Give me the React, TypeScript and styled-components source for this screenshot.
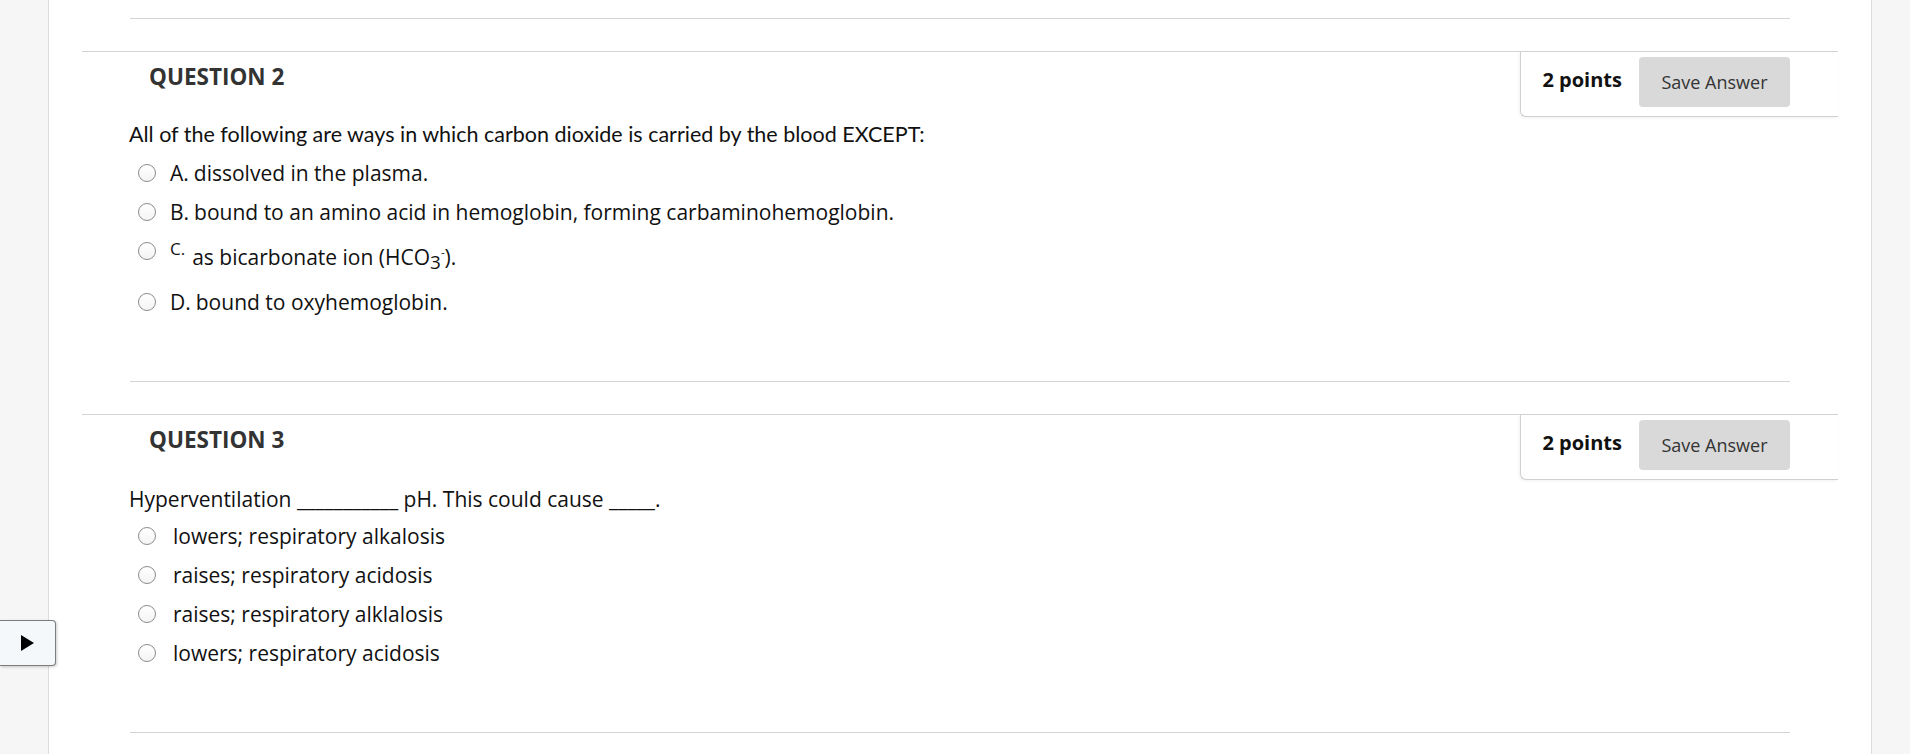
import styled, { createGlobalStyle } from 'styled-components';

const GlobalStyle = createGlobalStyle`
  html, body {
    margin: 0;
    padding: 0;
    background: #fff;
    font-family: 'Open Sans', 'Liberation Sans', sans-serif;
    overflow: hidden;
  }
`;

const Page = styled.div`
  display: flex;
  height: 754px;
  width: 1910px;
`;

const Rail = styled.div<{ $side: 'left' | 'right' }>`
  flex: 0 0 ${({ $side }) => ($side === 'left' ? '49px' : '39px')};
  box-sizing: border-box;
  background-color: #f6f6f6;
  ${({ $side }) => ($side === 'left' ? 'border-right' : 'border-left')}: 1px solid #dcdcdc;
`;

const Main = styled.main`
  flex: 1;
  padding-top: 18px;
  overflow: hidden;
`;

const Separator = styled.hr`
  margin: 0 81px 0 81px;
  border: none;
  border-top: 1px solid #d4d4d4;
  height: 0;
`;

const QuestionBlock = styled.section`
  margin-top: 32px;
`;

const Header = styled.div`
  margin: 0 33px;
  border-top: 1px solid #d4d4d4;
  display: flex;
  justify-content: space-between;
  align-items: flex-start;
`;

const Title = styled.h3`
  margin: 0;
  padding: 11px 0 0 67px;
  font-size: 22.5px;
  line-height: 28px;
  font-weight: 700;
  color: #333;
`;

const PointsBox = styled.div`
  display: flex;
  align-items: center;
  gap: 17px;
  padding: 5px 48px 9px 21px;
  border-left: 1px solid #d0d0d0;
  border-bottom: 1px solid #d0d0d0;
  border-bottom-left-radius: 6px;
  box-shadow: -1px 1px 3px rgba(0, 0, 0, 0.06);
`;

const Points = styled.span`
  margin-bottom: 5px;
  font-size: 20px;
  font-weight: 700;
  color: #111;
`;

const SaveButton = styled.button`
  width: 151px;
  height: 50px;
  border: none;
  border-radius: 4px;
  background-color: #d9d9d9;
  color: #333;
  font-family: 'Open Sans', 'Liberation Sans', sans-serif;
  font-size: 18px;
  padding: 0;
`;

const Body = styled.div`
  margin: 5px 0 0 80px;
`;

const Prompt = styled.p<{ $lato?: boolean }>`
  margin: 0;
  padding-bottom: ${({ $lato }) => ($lato ? '4px' : '0')};
  font-family: ${({ $lato }) => ($lato ? "Lato, 'Liberation Sans', sans-serif" : "'Open Sans', 'Liberation Sans', sans-serif")};
  font-size: ${({ $lato }) => ($lato ? '21.5px' : '21px')};
  line-height: ${({ $lato }) => ($lato ? '24px' : '28px')};
  color: #111;
`;

const Options = styled.ul`
  list-style: none;
  margin: 4px 0 0 9px;
  padding: 0;
`;

const Option = styled.li<{ $gap: number }>`
  display: flex;
  align-items: flex-start;
  gap: ${({ $gap }) => $gap}px;
  padding: 5px 0;
  font-size: 21px;
  line-height: 29px;
  color: #111;
`;

const Radio = styled.span`
  flex: 0 0 18px;
  height: 18px;
  margin-top: 5px;
  box-sizing: border-box;
  border: 1px solid #8c8c8c;
  border-radius: 50%;
  background: linear-gradient(#fff, #f4f4f4);
`;

const Choice = styled.span`
  display: flex;
  align-items: flex-start;
`;

const Letter = styled.span<{ $small?: boolean }>`
  flex: none;
  font-size: ${({ $small }) => ($small ? '17px' : 'inherit')};
  line-height: ${({ $small }) => ($small ? '24px' : 'inherit')};
  margin-right: ${({ $small }) => ($small ? '7px' : '5px')};
`;

const Para = styled.span<{ $drop?: boolean }>`
  display: block;
  margin: ${({ $drop }) => ($drop ? '6px 0' : '0')};
`;

const Sub = styled.sub`
  font-size: 0.9em;
  line-height: 0;
  vertical-align: -0.22em;
`;

const Sup = styled.sup`
  font-size: 0.55em;
  line-height: 0;
  vertical-align: 0.75em;
`;

const EndSeparator = styled(Separator)`
  margin-top: 59px;
`;

const PlayButton = styled.button`
  position: fixed;
  left: 0;
  top: 620px;
  width: 56px;
  height: 46px;
  box-sizing: border-box;
  padding: 0;
  background-color: #f5f8fb;
  border: 1px solid #7d7d7d;
  border-left: none;
  border-radius: 0 4px 4px 0;
  box-shadow: 1px 1px 3px rgba(0, 0, 0, 0.2);
  display: flex;
  align-items: center;
  justify-content: center;
`;

const QuestionHeader = ({ n }: { n: number }) => (
  <Header>
    <Title>QUESTION {n}</Title>
    <PointsBox>
      <Points>2 points</Points>
      <SaveButton>Save Answer</SaveButton>
    </PointsBox>
  </Header>
);

const q3Options = [
  'lowers; respiratory alkalosis',
  'raises; respiratory acidosis',
  'raises; respiratory alklalosis',
  'lowers; respiratory acidosis',
];

export default function App() {
  return (
    <>
      <GlobalStyle />
      <Page>
        <Rail $side="left" />
        <Main>
          <Separator />

          <QuestionBlock>
            <QuestionHeader n={2} />
            <Body>
              <Prompt $lato>
                All of the following are ways in which carbon dioxide is carried by the blood EXCEPT:
              </Prompt>
              <Options>
                <Option $gap={14}>
                  <Radio />
                  <Choice>
                    <Letter>A.</Letter>
                    <Para>dissolved in the plasma.</Para>
                  </Choice>
                </Option>
                <Option $gap={14}>
                  <Radio />
                  <Choice>
                    <Letter>B.</Letter>
                    <Para>bound to an amino acid in hemoglobin, forming carbaminohemoglobin.</Para>
                  </Choice>
                </Option>
                <Option $gap={14}>
                  <Radio />
                  <Choice>
                    <Letter $small>C.</Letter>
                    <Para $drop>
                      as bicarbonate ion (HCO<Sub>3</Sub>
                      <Sup>-</Sup>).
                    </Para>
                  </Choice>
                </Option>
                <Option $gap={14}>
                  <Radio />
                  <Choice>
                    <Letter>D.</Letter>
                    <Para>bound to oxyhemoglobin.</Para>
                  </Choice>
                </Option>
              </Options>
            </Body>
            <EndSeparator />
          </QuestionBlock>

          <QuestionBlock>
            <QuestionHeader n={3} />
            <Body>
              <Prompt>Hyperventilation ___________ pH. This could cause _____.</Prompt>
              <Options>
                {q3Options.map((text) => (
                  <Option key={text} $gap={17}>
                    <Radio />
                    <Para>{text}</Para>
                  </Option>
                ))}
              </Options>
            </Body>
            <EndSeparator />
          </QuestionBlock>
        </Main>
        <Rail $side="right" />
      </Page>
      <PlayButton aria-label="Play">
        <svg width="13" height="16" viewBox="0 0 13 16">
          <path d="M0 0 L13 8 L0 16 Z" fill="#000" />
        </svg>
      </PlayButton>
    </>
  );
}
